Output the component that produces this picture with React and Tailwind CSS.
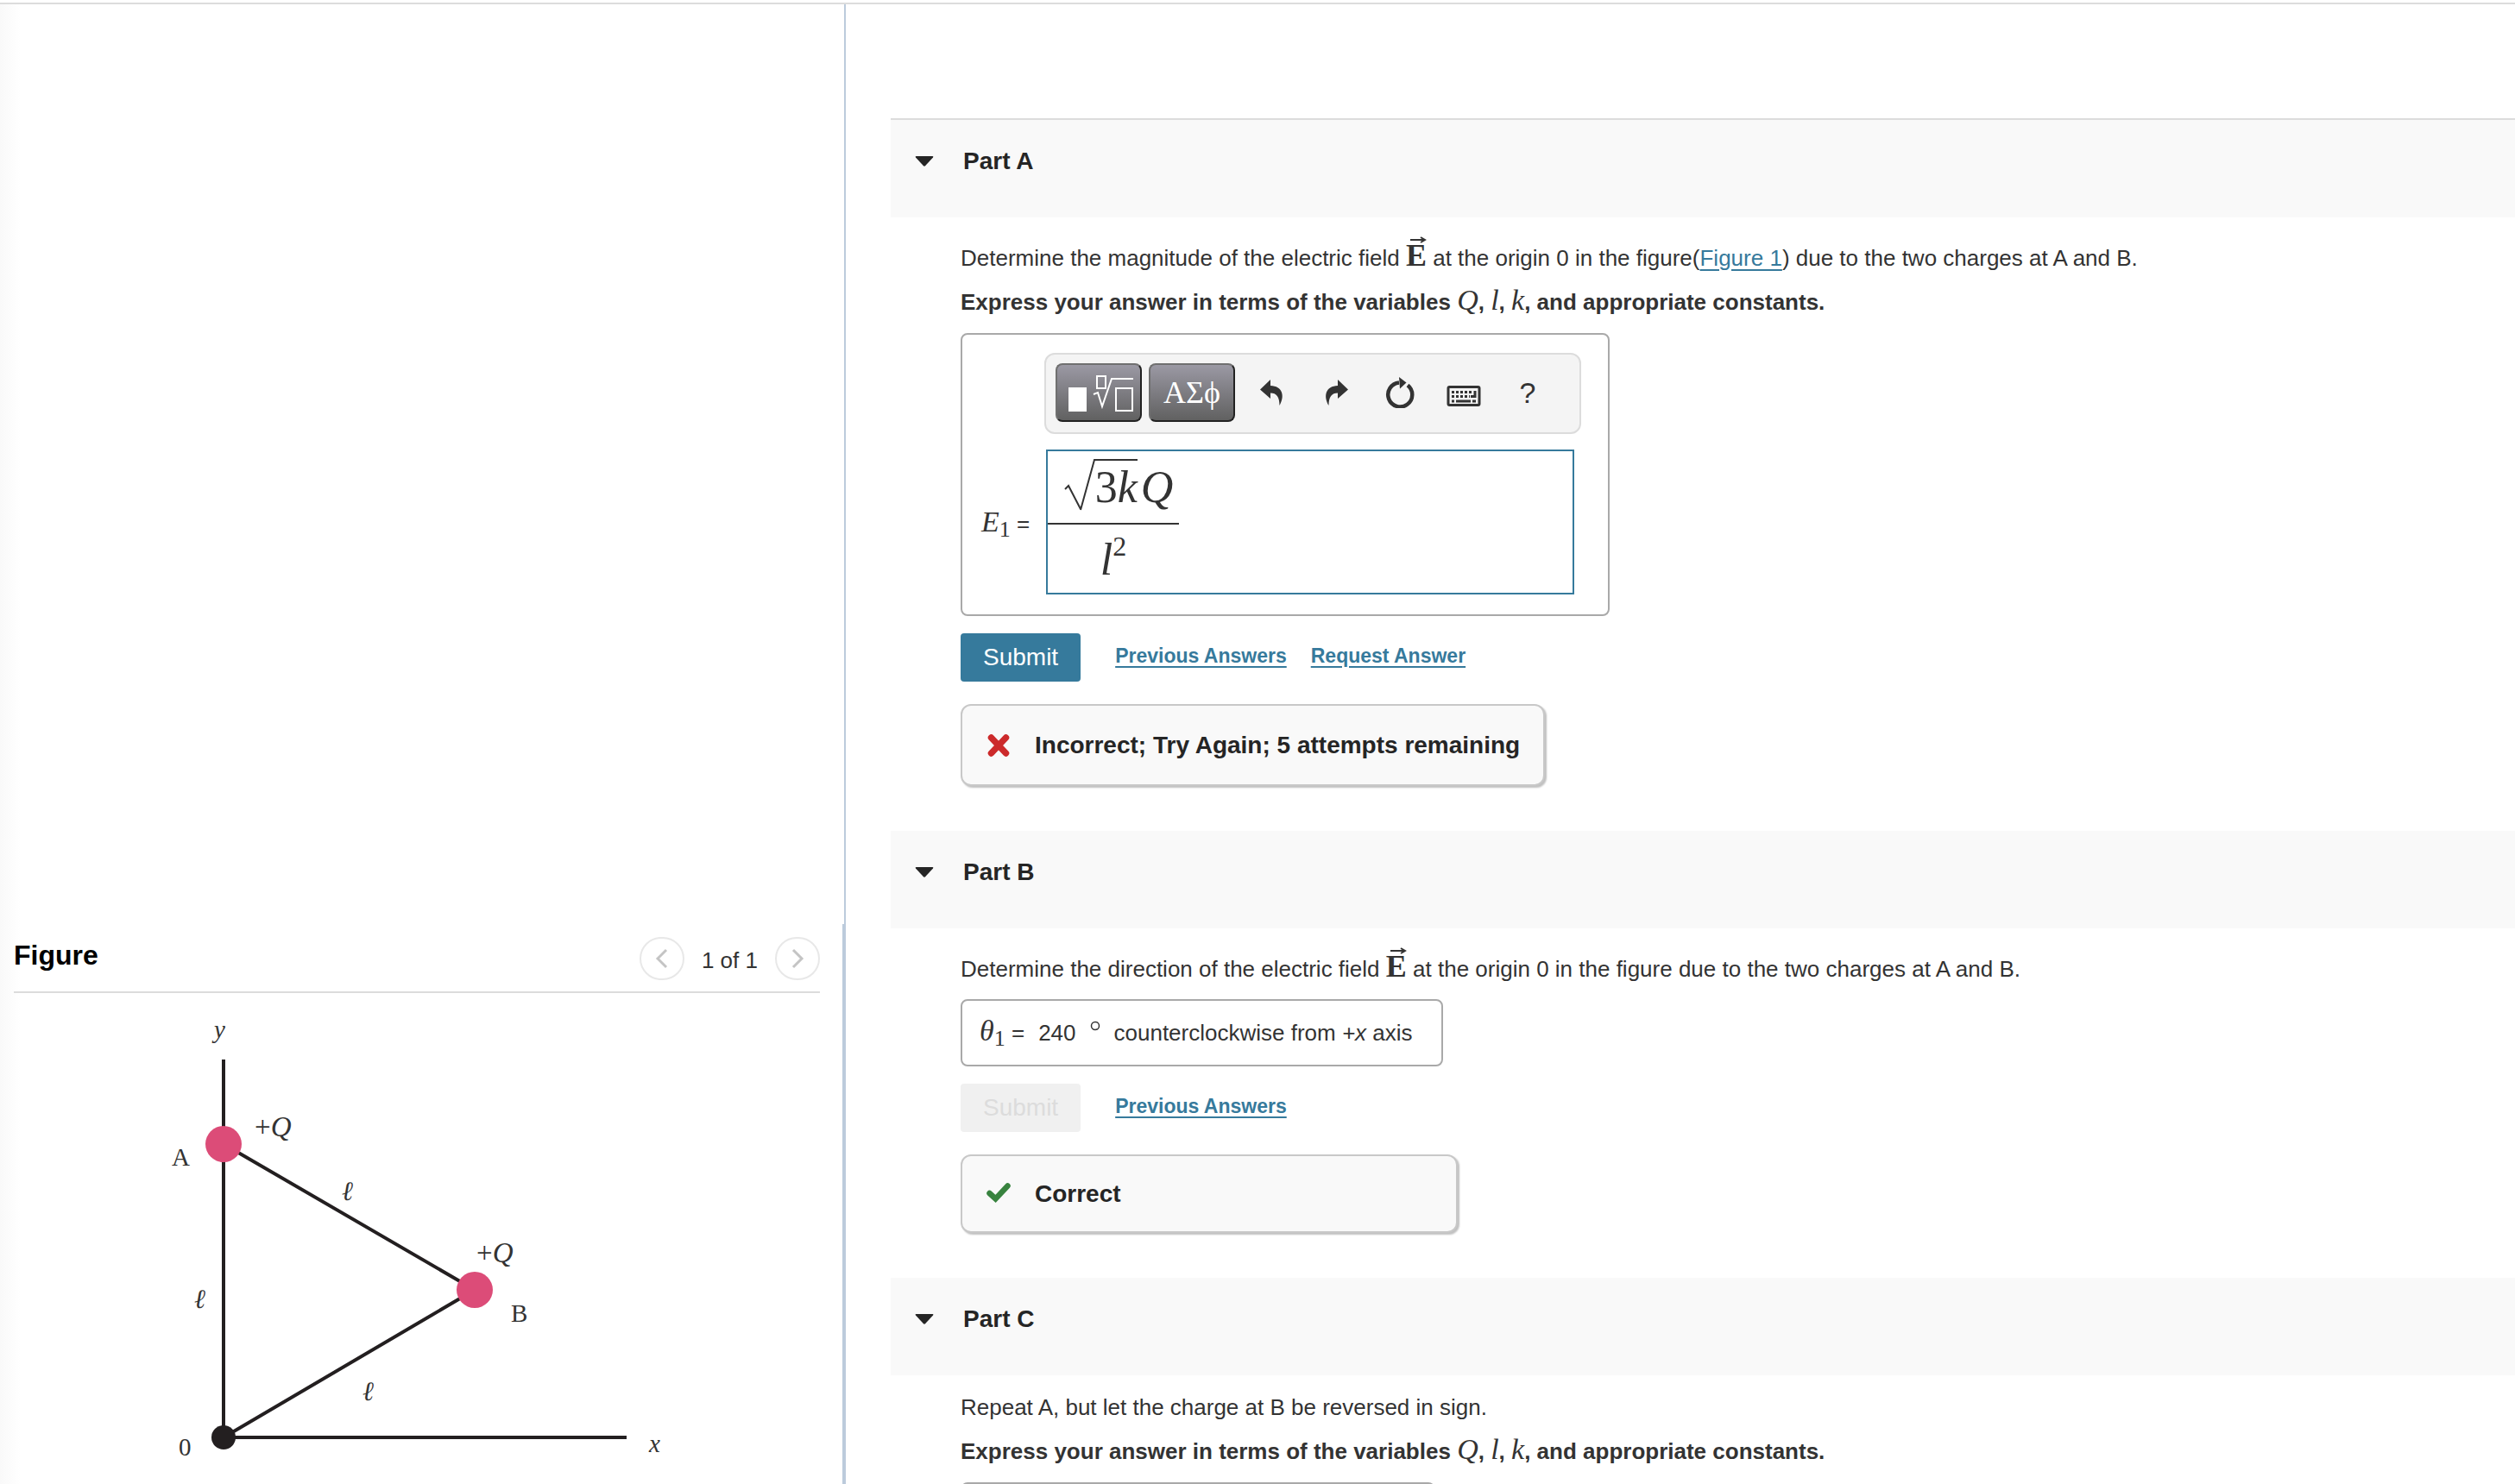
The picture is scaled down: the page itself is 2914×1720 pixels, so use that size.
import React, { useState } from 'react';

const UndoIcon = () => (
  <svg className="w-8 h-8" viewBox="0 0 32 32" fill="currentColor" aria-hidden="true">
    <path d="M14 1 L2 12.5 L14 23 V16.5 C21 16.5 24.5 21 24.5 31 C31 20 28 8.500 14 8 Z" />
  </svg>
);

const RedoIcon = () => (
  <svg className="w-8 h-8" viewBox="0 0 32 32" fill="currentColor" aria-hidden="true">
    <path d="M18 1 L30 12.5 L18 23 V16.5 C11 16.5 7.5 21 7.5 31 C1 20 4 8.500 18 8 Z" />
  </svg>
);

const ResetIcon = () => (
  <svg className="w-9 h-9" viewBox="0 0 36 36" aria-hidden="true">
    <path d="M27 9.500 A14 14 0 1 1 17 6.500" fill="none" stroke="currentColor" strokeWidth="4.500" />
    <path d="M17 0 L25.500 6.500 L18 13.500 Z" fill="currentColor" />
  </svg>
);

const KeyboardIcon = () => (
  <svg className="w-10 h-7 mt-2" viewBox="0 0 40 28" aria-hidden="true">
    <rect x="2" y="3.500" width="36" height="21" rx="1.500" fill="none" stroke="currentColor" strokeWidth="3" />
    <path d="M6 9.500 H29 M6 14.500 H27" stroke="currentColor" strokeWidth="3" strokeDasharray="3 2" />
    <path d="M33 8 V14.500 H28" fill="none" stroke="currentColor" strokeWidth="3" />
    <path d="M6 20 H9 M11 20 H28 M30 20 H34" stroke="currentColor" strokeWidth="3" />
  </svg>
);

const TemplateIcon = () => (
  <svg className="w-20 h-12" viewBox="10 10 80 48" fill="none" stroke="#fff" strokeWidth="2" aria-hidden="true">
    <rect x="15" y="28" width="21" height="28" fill="#fff" stroke="none" />
    <rect x="48" y="15" width="10" height="14" />
    <path d="M44 36 L49 34 L54 50 L65 18 H90" />
    <rect x="70" y="29" width="19" height="26" />
  </svg>
);

const WrongIcon = () => (
  <svg className="w-7 h-7 shrink-0" viewBox="0 0 28 28" aria-hidden="true">
    <path d="M5.500 5 L22.500 23 M22.500 5 L5.500 23" stroke="#cc2a2b" strokeWidth="7.500" strokeLinecap="round" />
  </svg>
);

const RightIcon = () => (
  <svg className="w-7 h-7 shrink-0" viewBox="0 0 28 28" aria-hidden="true">
    <path d="M3.500 13 L10.500 19.500 L24.500 4.500" fill="none" stroke="#38833f" strokeWidth="6.500" strokeLinecap="round" />
  </svg>
);

const Vec = () => (
  <span className="relative inline-block font-['Liberation_Serif',serif] font-bold text-[36px] leading-none">
    E
    <svg className="absolute left-1 -top-1 w-5 h-2" viewBox="0 0 20 8" aria-hidden="true">
      <path d="M1 4 H17 M13 1 L18 4 L13 7" fill="none" stroke="currentColor" strokeWidth="2" />
    </svg>
  </span>
);

const Var = ({ children }) => (
  <i className="font-['Liberation_Serif',serif] font-normal text-[34px] leading-none">{children}</i>
);

const Part = ({ title, bordered, children }) => {
  const [open, setOpen] = useState(true);
  return (
    <section>
      <h2
        className={
          bordered
            ? 'bg-[#f9f9f9] border-t-2 border-[#dcdcdc]'
            : 'bg-[#f9f9f9]'
        }
      >
        <button
          onClick={() => setOpen(!open)}
          aria-expanded={open}
          className="flex items-center w-full h-[113px] pl-7 pb-[17px] text-left text-[28px] leading-10 font-bold text-[#252525]"
        >
          <svg className="w-[22px] h-3 mr-[34px]" viewBox="0 0 22 12" fill="currentColor" aria-hidden="true">
            <path d="M1.500 0 H20.500 Q22 0 21 1.500 L12 11.300 Q11 12 10 11.300 L1 1.500 Q0 0 1.500 0 Z" />
          </svg>
          {title}
        </button>
      </h2>
      {open && <div className="pl-[81px]">{children}</div>}
    </section>
  );
};

const Express = () => (
  <p className="h-[52px] leading-[52px] font-bold">
    Express your answer in terms of the variables <Var>Q</Var>, <Var>l</Var>, <Var>k</Var>, and appropriate constants.
  </p>
);

const Actions = ({ disabled, links }) => (
  <div className="flex items-center mt-5 mb-[26px]">
    <button
      disabled={disabled}
      className="h-14 px-[26px] rounded-sm text-[28px] bg-[#367a9c] text-white disabled:bg-[#f0f0f0] disabled:text-[#dcdcdc]"
    >
      Submit
    </button>
    <div className="flex gap-7 ml-10 pb-1">
      {links.map((label) => (
        <a key={label} href="#" className="text-[23px] font-bold text-[#367a9c] underline underline-offset-4 decoration-2">
          {label}
        </a>
      ))}
    </div>
  </div>
);

const Feedback = ({ icon, className, children }) => (
  <div
    role="status"
    className={`flex items-center gap-7 mb-[52px] px-7 border-2 border-[#c8c8c8] rounded-xl bg-[#f9f9f9] shadow-[2px_2px_2px_#c0c0c0] text-[28px] font-bold text-[#252525] whitespace-nowrap ${className}`}
  >
    {icon}
    <span>{children}</span>
  </div>
);

const toolButton = 'flex items-center justify-center w-[74px] h-full text-[#333]';
const paletteButton =
  "flex items-center justify-center w-[100px] h-[68px] rounded-lg border-2 border-t-[#707070] border-l-[#707070] border-r-[#222] border-b-[#222] bg-linear-to-b from-[#9b99a4] to-[#616161] text-white text-[36px] leading-none font-['Liberation_Serif',serif]";

const EquationEditor = () => (
  <div className="w-[752px] max-w-full mt-[10px] pt-[21px] pb-[23px] pr-[31px] border-2 border-[#a9a9a9] rounded-lg">
    <div className="flex items-center gap-2 h-[94px] ml-[95px] pl-[11px] pb-[2px] border-2 border-[#dcdcdc] rounded-xl bg-[#f4f4f4]" role="toolbar">
      <button className={paletteButton} aria-label="Templates">
        <TemplateIcon />
      </button>
      <button className={paletteButton}>ΑΣϕ</button>
      <div className="flex h-full -ml-[2px]">
        <button className={toolButton} aria-label="Undo"><UndoIcon /></button>
        <button className={toolButton} aria-label="Redo"><RedoIcon /></button>
        <button className={toolButton} aria-label="Reset"><ResetIcon /></button>
        <button className={toolButton} aria-label="Keyboard shortcuts"><KeyboardIcon /></button>
        <button className={`${toolButton} text-[34px]`} aria-label="Help">?</button>
      </div>
    </div>
    <div className="flex items-center mt-[18px] pr-2">
      <div id="e1-label" className="w-[97px] pl-[22px] pt-1 whitespace-nowrap">
        <Var>E</Var>
        <sub className="font-['Liberation_Serif',serif] text-[26px] leading-none">1</sub> =
      </div>
      <div
        role="textbox"
        tabIndex={0}
        aria-labelledby="e1-label"
        className="flex-1 h-[168px] border-2 border-[#367a9c] font-['Liberation_Serif',serif] text-[52px] leading-none text-[#333]"
      >
        <div className="flex flex-col w-[152px] text-center">
          <div className="flex items-start justify-center gap-1 h-[85px] pt-[9px] pl-3 border-b-2 border-[#333]">
            <span className="flex">
              <svg className="w-9 h-[60px] shrink-0" viewBox="0 0 36 60" fill="none" stroke="#333" aria-hidden="true">
                <path d="M1 35 L5 31 L19 58" strokeWidth="2" />
                <path d="M19 59 L35 1 H36" strokeWidth="2" />
              </svg>
              <span className="border-t-2 border-[#333] pt-[5px]">
                3<i>k</i>
              </span>
            </span>
            <i className="pt-[7px]">Q</i>
          </div>
          <div className="pt-[15px]">
            <i>l</i>
            <sup className="align-[6px] text-[32px] leading-none">2</sup>
          </div>
        </div>
      </div>
    </div>
  </div>
);

const FigureDiagram = () => (
  <svg
    className="w-[780px] h-[569px]"
    viewBox="0 1151 780 569"
    fontFamily="'Liberation Serif', serif"
    fontSize="29"
    fill="#333"
    role="img"
    aria-label="Two charges at the corners of an equilateral triangle"
  >
    <g stroke="#231f20" strokeWidth="4">
      <path d="M259 1228 V1666 H726" fill="none" />
      <path d="M259 1326 L550 1495 L259 1666" fill="none" />
    </g>
    <circle cx="259" cy="1326" r="21" fill="#dc4c78" />
    <circle cx="550" cy="1495" r="21" fill="#dc4c78" />
    <circle cx="259" cy="1666" r="14" fill="#231f20" />
    <text x="248" y="1203" fontStyle="italic">y</text>
    <text x="752" y="1683" fontStyle="italic">x</text>
    <text x="199" y="1351">A</text>
    <text x="592" y="1532">B</text>
    <text x="207" y="1687">0</text>
    <text x="295" y="1317" fontSize="33">+<tspan fontStyle="italic">Q</tspan></text>
    <text x="552" y="1463" fontSize="33">+<tspan fontStyle="italic">Q</tspan></text>
    <g fontSize="31" fontStyle="italic">
      <text x="396" y="1391">ℓ</text>
      <text x="225" y="1516">ℓ</text>
      <text x="420" y="1623">ℓ</text>
    </g>
  </svg>
);

const pagerButton = 'flex items-center justify-center w-[52px] h-[50px] rounded-full border-2 border-[#e8e8e8]';

const FigurePanel = () => (
  <aside className="flex flex-col w-[980px] shrink-0 bg-linear-to-r from-[#f9f9f9] to-white to-[24px]">
    <div className="flex-1 border-r-2 border-[#bccbdc]" />
    <div className="h-[649px] border-r-4 border-[#bccbdc] pl-4 pr-[26px]">
      <div className="flex items-center justify-between h-20 pt-[2px] border-b-2 border-[#dcdcdc]">
        <h2 className="pb-2 text-[32px] font-bold text-black">Figure</h2>
        <div className="flex items-center gap-5">
          <button className={pagerButton} aria-label="Previous figure">
            <svg className="w-4 h-6" viewBox="0 0 16 24" fill="none" stroke="#c4c4c4" strokeWidth="3" aria-hidden="true">
              <path d="M13 2 L3 12 L13 22" />
            </svg>
          </button>
          <span className="pt-1">1 of 1</span>
          <button className={pagerButton} aria-label="Next figure">
            <svg className="w-4 h-6" viewBox="0 0 16 24" fill="none" stroke="#c4c4c4" strokeWidth="3" aria-hidden="true">
              <path d="M3 2 L13 12 L3 22" />
            </svg>
          </button>
        </div>
      </div>
      <div className="-ml-4">
        <FigureDiagram />
      </div>
    </div>
  </aside>
);

const App = () => {
  return (
    <div className="flex flex-col h-screen overflow-hidden pt-[3px] bg-white font-['Liberation_Sans',Arial,sans-serif] text-[26px] text-[#333]">
      <div className="flex flex-1 min-h-0 border-t-2 border-[#dcdcdc]">
        <FigurePanel />
        <main className="flex-1 min-w-0 overflow-hidden pl-[52px] pt-[132px]">
          <Part title="Part A" bordered>
            <p className="h-[50px] mt-[22px] leading-[50px]">
              Determine the magnitude of the electric field <Vec /> at the origin 0 in the figure(
              <a href="#" className="text-[#367a9c] underline underline-offset-4 decoration-2">Figure 1</a>) due to the two charges at A and B.
            </p>
            <Express />
            <EquationEditor />
            <Actions links={['Previous Answers', 'Request Answer']} />
            <Feedback icon={<WrongIcon />} className="w-[677px] h-[95px]">
              Incorrect; Try Again; 5 attempts remaining
            </Feedback>
          </Part>

          <Part title="Part B">
            <p className="h-[50px] mt-[22px] leading-[50px]">
              Determine the direction of the electric field <Vec /> at the origin 0 in the figure due to the two charges at A and B.
            </p>
            <div className="flex items-center w-[559px] h-[78px] mt-[10px] pl-5 border-2 border-[#a9a9a9] rounded-lg whitespace-nowrap">
              <span>
                <Var>θ</Var>
                <sub className="font-['Liberation_Serif',serif] text-[26px] leading-none">1</sub> =
              </span>
              <span className="ml-4">240</span>
              <svg className="w-3 h-3 ml-4 mb-4" viewBox="0 0 12 12" aria-hidden="true">
                <circle cx="6" cy="6" r="4.500" fill="none" stroke="currentColor" strokeWidth="1.500" />
              </svg>
              <span className="ml-4">
                counterclockwise from <i>+x</i> axis
              </span>
            </div>
            <Actions disabled links={['Previous Answers']} />
            <Feedback icon={<RightIcon />} className="w-[576px] h-[91px]">
              Correct
            </Feedback>
          </Part>

          <Part title="Part C">
            <p className="h-[50px] mt-3 leading-[50px]">Repeat A, but let the charge at B be reversed in sign.</p>
            <Express />
            <div className="w-[550px] h-[78px] mt-[10px] border-2 border-[#a9a9a9] rounded-lg" />
          </Part>
        </main>
      </div>
    </div>
  );
};

export default App;
